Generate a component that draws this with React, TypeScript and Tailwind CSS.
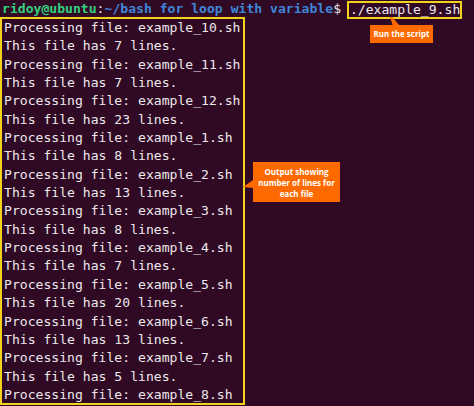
import React from "react";

const lines: string[] = [
  "Processing file: example_10.sh",
  "This file has 7 lines.",
  "Processing file: example_11.sh",
  "This file has 7 lines.",
  "Processing file: example_12.sh",
  "This file has 23 lines.",
  "Processing file: example_1.sh",
  "This file has 8 lines.",
  "Processing file: example_2.sh",
  "This file has 13 lines.",
  "Processing file: example_3.sh",
  "This file has 8 lines.",
  "Processing file: example_4.sh",
  "This file has 7 lines.",
  "Processing file: example_5.sh",
  "This file has 20 lines.",
  "Processing file: example_6.sh",
  "This file has 13 lines.",
  "Processing file: example_7.sh",
  "This file has 5 lines.",
  "Processing file: example_8.sh",
];

export default function App() {
  return (
    <div
      className="relative w-[474px] h-[406px] overflow-hidden bg-[#300a24] text-[#ede8eb] text-[13.1px] leading-[18.35px]"
      style={{ fontFamily: '"DejaVu Sans Mono", monospace' }}
    >
      <div className="flex h-[18px] items-center pl-[2px] whitespace-pre">
        <span className="font-bold text-[#35d07f]">ridoy@ubuntu</span>
        <span className="text-[#ede8eb]">:</span>
        <span className="font-bold text-[#3f86d8]">~/bash for loop with variable</span>
        <span>$ </span>
        <span className="ml-[-2px] mt-[1px] border-2 border-[#f2d21a] pl-[1px] pr-0 h-[18px] leading-[14px] block">
          ./example_9.sh
        </span>
      </div>
      <div className="mt-[-1px] w-[245px] h-[388px] border-2 border-[#f2d21a] pl-[2px] whitespace-pre">
        {lines.map((l, i) => (
          <div key={i}>{l}</div>
        ))}
      </div>

      {/* Callout: Run the script */}
      <div
        className="absolute left-[370px] top-[25px] w-[63px] h-[18px] bg-[#ff6a00] flex items-center justify-center text-white text-[8px] font-bold"
        style={{ fontFamily: '"Open Sans", sans-serif' }}
      >
        Run the script
      </div>
      <svg className="absolute left-[388px] top-[17px]" width="14" height="9" viewBox="0 0 14 9">
        <polygon points="2,0 4,0 12,9 5,9" fill="#ff6a00" />
      </svg>

      {/* Callout: Output */}
      <div
        className="absolute left-[253px] top-[162px] w-[87px] h-[40px] bg-[#ff6a00] flex items-center justify-center text-center text-white text-[8px] font-bold leading-[11px]"
        style={{ fontFamily: '"Open Sans", sans-serif' }}
      >
        Output showing
        <br />
        number of lines for
        <br />
        each file
      </div>
      <svg className="absolute left-[243px] top-[180px]" width="11" height="12" viewBox="0 0 11 12">
        <polygon points="10,0 10,8 0,7" fill="#ff6a00" />
      </svg>
    </div>
  );
}
